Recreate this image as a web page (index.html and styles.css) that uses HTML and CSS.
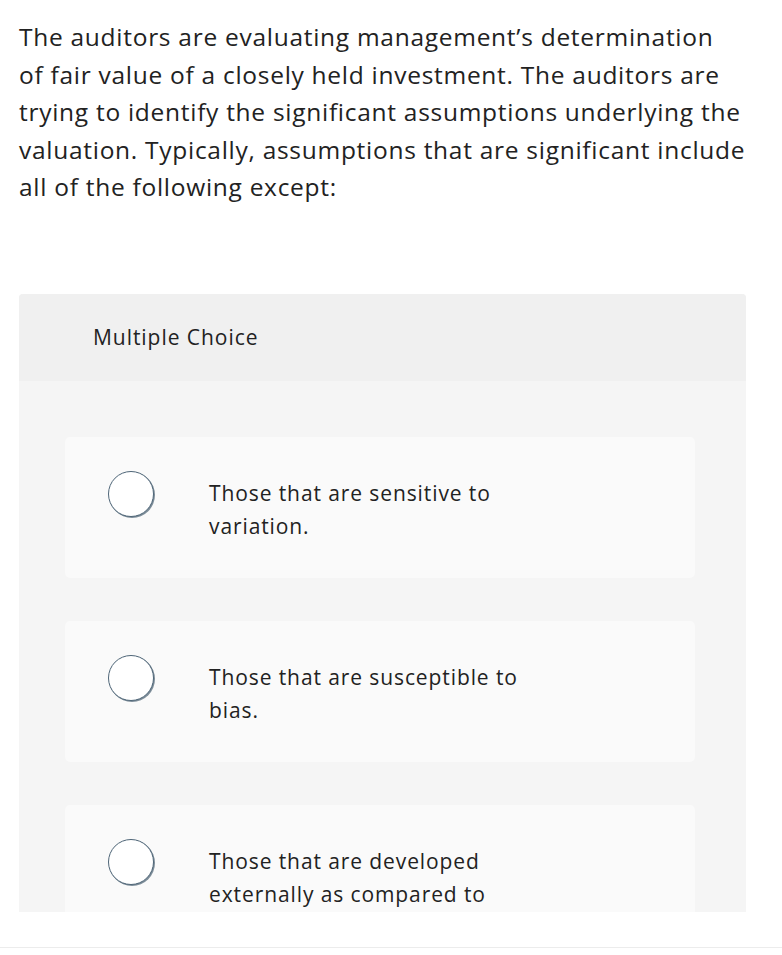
FILE: index.html
```html
<!DOCTYPE html>
<html>
<head>
<meta charset="utf-8">
<link rel="stylesheet" href="styles.css">
</head>
<body>
<div class="page">
  <p class="question">The auditors are evaluating management’s determination<br>of fair value of a closely held investment. The auditors are<br>trying to identify the significant assumptions underlying the<br>valuation. Typically, assumptions that are significant include<br>all of the following except:</p>
  <div class="card">
    <div class="card-head">Multiple Choice</div>
    <div class="card-body">
      <div class="option">
        <span class="radio"></span>
        <span class="label">Those that are sensitive to<br>variation.</span>
      </div>
      <div class="option">
        <span class="radio"></span>
        <span class="label">Those that are susceptible to<br>bias.</span>
      </div>
      <div class="option">
        <span class="radio"></span>
        <span class="label">Those that are developed<br>externally as compared to</span>
      </div>
    </div>
  </div>
  <div class="rule"></div>
</div>
</body>
</html>
```
FILE: styles.css
```css
html, body {
  margin: 0;
  padding: 0;
  background: #fff;
}
body {
  font-family: "Open Sans", "Lato", sans-serif;
  color: #222;
}
.page {
  width: 782px;
}
.question {
  margin: 0;
  padding: 18px 0 0 19px;
  width: 760px;
  font-size: 24.5px;
  line-height: 37.5px;
  letter-spacing: 0.72px;
  white-space: nowrap;
}
.card {
  margin: 88px 0 0 19px;
  width: 727px;
  height: 618px;
  overflow: hidden;
  border-radius: 4px 4px 0 0;
  background: #f5f5f5;
}
.card-head {
  height: 87px;
  background: #f0f0f0;
  padding-left: 74px;
  display: flex;
  align-items: center;
  font-size: 21px;
  letter-spacing: 0.95px;
  color: #222;
}
.card-body {
  padding: 56px 51px 0 46px;
  display: flex;
  flex-direction: column;
  gap: 43px;
}
.option {
  height: 141px;
  flex: none;
  background: #fafafa;
  border-radius: 5px;
  display: flex;
  align-items: flex-start;
  padding: 34px 0 0 43px;
  box-sizing: border-box;
}
.radio {
  width: 44px;
  height: 44px;
  border-radius: 50%;
  background: #fff;
  border: 1px solid #4e6577;
  box-shadow: 1px 1px 0 0 #7d8d99;
  flex: none;
}
.label {
  margin-left: 55px;
  margin-top: 6px;
  font-size: 21px;
  line-height: 33px;
  letter-spacing: 0.9px;
  color: #222;
}
.rule {
  margin-top: 35px;
  height: 1px;
  background: #ececec;
}
```
